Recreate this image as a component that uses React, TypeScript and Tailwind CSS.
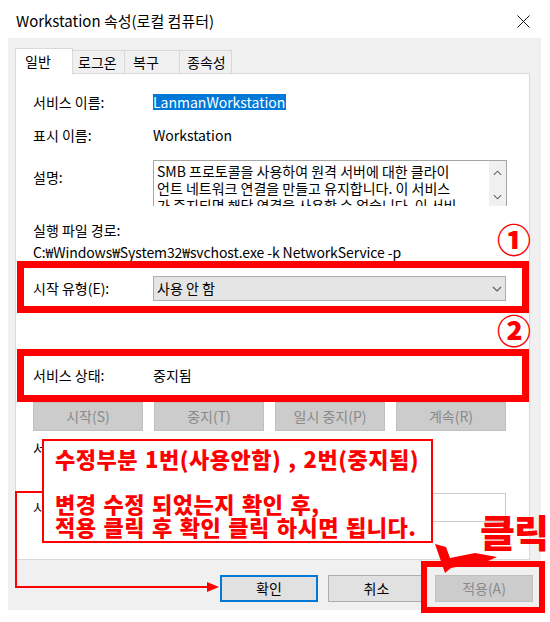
import React from 'react';

const FONT = "font-['Noto_Sans_CJK_KR',sans-serif]";

const Chevron = ({ up = false, w = 10 }: { up?: boolean; w?: number }) => (
  <svg width={w} height={6} viewBox="0 0 10 6" className="block">
    <polyline
      points={up ? '1,5 5,1 9,5' : '1,1 5,5 9,1'}
      fill="none"
      stroke="#606060"
      strokeWidth="1.2"
    />
  </svg>
);

const DisabledButton = ({ label }: { label: string }) => (
  <div className="w-[110px] h-[29px] flex items-center justify-center bg-[#cccccc] border border-[#bfbfbf] text-[#8a8a8a] text-[14px]">
    {label}
  </div>
);

export default function App() {
  return (
    <div className={`relative w-[550px] h-[622px] overflow-hidden bg-white text-black text-[14px] ${FONT}`}>
      {/* title bar */}
      <div className="h-[38px] flex items-center justify-between pl-[16px] pr-[20px]">
        <span className="text-[15px] leading-[20px] mt-[3px]">Workstation 속성(로컬 컴퓨터)</span>
        <svg width="13" height="13" viewBox="0 0 13 13" className="mt-[5px]">
          <path d="M0.5 0.5 L12.5 12.5 M12.5 0.5 L0.5 12.5" stroke="#111" strokeWidth="1" />
        </svg>
      </div>

      {/* dialog body */}
      <div className="ml-[8px] w-[533px] h-[572px] bg-[#f0f0f0] pt-[10px] pl-[7px]">
        {/* tabs */}
        <div className="flex items-end h-[25px]">
          <div className="relative z-10 w-[58px] h-[26px] -mb-px bg-white border border-b-0 border-[#d9d9d9] pl-[9px] leading-[24px]">
            일반
          </div>
          <div className="w-[52px] h-[23px] border-t border-r border-[#d9d9d9] pl-[5px] leading-[22px]">로그온</div>
          <div className="w-[55px] h-[23px] border-t border-r border-[#d9d9d9] pl-[8px] leading-[22px]">복구</div>
          <div className="w-[52px] h-[23px] border-t border-r border-[#d9d9d9] pl-[7px] leading-[22px]">종속성</div>
        </div>

        {/* panel */}
        <div className="w-[515px] h-[487px] bg-white border border-[#d9d9d9] pl-[17px] pt-[16px]">
          <div className="flex items-center h-[24px]">
            <span className="w-[120px]">서비스 이름:</span>
            <span className="bg-[#0078d7] text-white leading-[16px] pr-px">LanmanWorkstation</span>
          </div>
          <div className="flex items-center h-[24px] mt-[9px]">
            <span className="w-[120px]">표시 이름:</span>
            <span>Workstation</span>
          </div>
          <div className="flex items-start mt-[13px]">
            <span className="w-[120px] leading-[20px] mt-[7px]">설명:</span>
            <div className="w-[354px] h-[46px] flex border-t border-l border-r border-[#a6a6a6] overflow-hidden">
              <div className="flex-1 pl-[3px] pt-[2px] leading-[17px] whitespace-nowrap overflow-hidden">
                SMB 프로토콜을 사용하여 원격 서버에 대한 클라이
                <br />
                언트 네트워크 연결을 만들고 유지합니다. 이 서비스
                <br />
                가 중지되면 해당 연결을 사용할 수 없습니다. 이 서비
              </div>
              <div className="w-[17px] bg-[#f0f0f0] flex flex-col items-center pt-[9px] gap-[18px]">
                <Chevron up w={9} />
                <Chevron w={9} />
              </div>
            </div>
          </div>
          <div className="h-[20px] leading-[20px] mt-[14px]">실행 파일 경로:</div>
          <div className="h-[20px] leading-[20px] mt-[2px] whitespace-nowrap tracking-[-0.1px]">
            C:₩Windows₩System32₩svchost.exe -k NetworkService -p
          </div>
          <div className="flex items-center h-[25px] mt-[14px]">
            <span className="w-[120px]">시작 유형(E):</span>
            <div className="w-[353px] h-[25px] flex items-center justify-between bg-[#e5e5e5] border border-[#adadad] pl-[3px] pr-[3px]">
              <span>사용 안 함</span>
              <Chevron />
            </div>
          </div>
          <div className="flex items-center h-[24px] mt-[62px]">
            <span className="w-[120px]">서비스 상태:</span>
            <span>중지됨</span>
          </div>
          <div className="flex gap-[11px] mt-[15px]">
            <DisabledButton label="시작(S)" />
            <DisabledButton label="중지(T)" />
            <DisabledButton label="일시 중지(P)" />
            <DisabledButton label="계속(R)" />
          </div>
          <div className="h-[20px] leading-[20px] mt-[7px] whitespace-nowrap">
            서비스를 시작할 때 적용할 시작 매개 변수를 지정할 수 있습니다.
          </div>
          <div className="flex items-center h-[29px] mt-[35px]">
            <span className="w-[120px]">시작 매개 변수(M):</span>
            <div className="w-[353px] h-[29px] bg-white border border-[#cccccc]" />
          </div>
        </div>

        {/* bottom buttons */}
        <div className="flex justify-end gap-[10px] pr-[8px] mt-[15px]">
          <div className="w-[98px] h-[27px] flex items-center justify-center bg-[#e1e1e1] border-2 border-[#0078d7]">확인</div>
          <div className="w-[97px] h-[27px] flex items-center justify-center bg-[#e1e1e1] border border-[#adadad]">취소</div>
          <div className="w-[98px] h-[27px] flex items-center justify-center bg-[#cccccc] border border-[#bfbfbf] text-[#8a8a8a]">
            적용(A)
          </div>
        </div>
      </div>

      {/* annotations */}
      <div className="absolute left-[17px] top-[261px] w-[512px] h-[52px] border-[7px] border-[#ff0000]" />
      <div className="absolute left-[17px] top-[349px] w-[512px] h-[53px] border-[7px] border-[#ff0000]" />
      <span className="absolute left-[497px] top-[221px] text-[34px] leading-[36px] font-black text-[#ff0000]">①</span>
      <span className="absolute left-[497px] top-[312px] text-[34px] leading-[36px] font-black text-[#ff0000]">②</span>

      <div className="absolute left-[42px] top-[439px] w-[391px] h-[104px] bg-white border-2 border-[#ff0000] pl-[11px] pt-[6px] text-[22px] leading-[22.5px] font-black tracking-[0.5px] [word-spacing:1.5px] text-[#ff0000] whitespace-nowrap">
        수정부분 1번(사용안함) , 2번(중지됨)
        <br />
        <br />
        변경 수정 되었는지 확인 후,
        <br />
        적용 클릭 후 확인 클릭 하시면 됩니다.
      </div>

      <div className="absolute left-[421px] top-[561px] w-[124px] h-[52px] border-[6px] border-[#ff0000]" />

      <svg className="absolute left-0 top-0 pointer-events-none" width="550" height="622" viewBox="0 0 550 622">
        <polyline points="42,492 16,492 16,587 209,587" fill="none" stroke="#ff0000" strokeWidth="2" />
        <polygon points="207,582 219,587 207,592" fill="#ff0000" />
        <polygon points="435,544 446,547 450,558 475,553 497,557 488,561 451,568 445,573" fill="#ff0000" />
      </svg>

      <span className="absolute left-[480px] top-[508px] text-[38px] leading-[46px] font-black tracking-[-1px] text-[#ff0000]">
        클릭
      </span>
    </div>
  );
}
